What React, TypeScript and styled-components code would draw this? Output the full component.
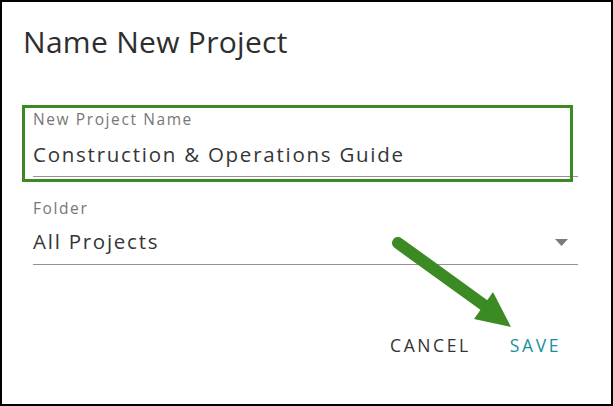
import React from "react";
import styled, { createGlobalStyle } from "styled-components";

const Global = createGlobalStyle`
  html, body { margin: 0; padding: 0; background: #fff; }
  * { box-sizing: border-box; }
`;

const Frame = styled.div`
  position: relative;
  width: 613px;
  height: 406px;
  border: 2px solid #000;
  background: #fff;
  font-family: "Open Sans", "Liberation Sans", sans-serif;
  color: #333;
  display: flex;
  flex-direction: column;
`;

const Title = styled.h2`
  margin: 22px 0 0 0;
  padding-left: 21px;
  font-size: 30px;
  line-height: 36px;
  font-weight: 400;
  letter-spacing: 0.3px;
  color: #2e2e2e;
`;

const Fields = styled.div`
  display: flex;
  flex-direction: column;
  padding: 0 33px 0 31px;
`;

const Field = styled.div<{ $top: number; $gap: number; $pad: number }>`
  margin-top: ${(p) => p.$top}px;
  display: flex;
  flex-direction: column;
  gap: ${(p) => p.$gap}px;
  padding-bottom: ${(p) => p.$pad}px;
  border-bottom: 1px solid #949494;
`;

const Label = styled.label`
  font-size: 15.5px;
  line-height: 18px;
  color: #777;
  letter-spacing: 1.6px;
`;

const ValueRow = styled.div`
  display: flex;
  align-items: center;
  justify-content: space-between;
`;

const Value = styled.div`
  font-size: 20.5px;
  line-height: 24px;
  color: #353535;
  letter-spacing: 1.75px;
`;

const Caret = styled.svg`
  width: 13px;
  height: 7px;
  margin: 3px 10px 0 0;
  fill: #7a7a7a;
`;

const Actions = styled.div`
  margin-top: 70px;
  display: flex;
  justify-content: flex-end;
  gap: 39px;
  padding-right: 50px;
`;

const Button = styled.button<{ $primary?: boolean }>`
  border: none;
  background: none;
  padding: 0;
  font-family: inherit;
  font-size: 17.5px;
  font-weight: 500;
  line-height: 20px;
  letter-spacing: 2.6px;
  text-transform: uppercase;
  color: ${(p) => (p.$primary ? "#17919b" : "#333")};
  cursor: pointer;
`;

const Highlight = styled.div`
  position: absolute;
  left: 20px;
  top: 103px;
  width: 551px;
  height: 77px;
  border: 3px solid #3b8a24;
  pointer-events: none;
`;

const Overlay = styled.svg`
  position: absolute;
  left: 0;
  top: 0;
  width: 609px;
  height: 402px;
  pointer-events: none;
`;

export default function App() {
  return (
    <>
      <Global />
      <Frame>
        <Title>Name New Project</Title>
        <Fields>
          <Field $top={50} $gap={14} $pad={10}>
            <Label>New Project Name</Label>
            <Value>Construction &amp; Operations Guide</Value>
          </Field>
          <Field $top={22} $gap={12} $pad={11}>
            <Label>Folder</Label>
            <ValueRow>
              <Value>All Projects</Value>
              <Caret viewBox="0 0 13 7">
                <polygon points="0,0 13,0 6.5,7" />
              </Caret>
            </ValueRow>
          </Field>
        </Fields>
        <Actions>
          <Button>Cancel</Button>
          <Button $primary>Save</Button>
        </Actions>
        <Highlight />
        <Overlay viewBox="2 2 609 402">
          <line
            x1="398"
            y1="243"
            x2="488"
            y2="308"
            stroke="#3b8a24"
            strokeWidth="12"
            strokeLinecap="round"
          />
          <polygon points="511,327 493,292 474,319" fill="#3b8a24" />
        </Overlay>
      </Frame>
    </>
  );
}
